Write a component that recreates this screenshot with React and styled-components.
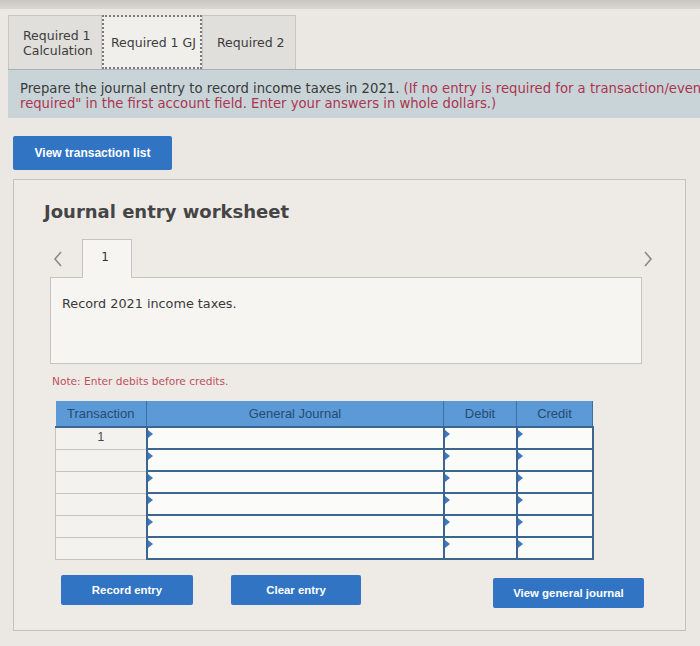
import React from 'react'
import styled, { createGlobalStyle } from 'styled-components'

const GlobalStyle = createGlobalStyle`
  html, body {
    margin: 0;
    padding: 0;
    background: #ebe8e3;
    width: 700px;
    height: 646px;
    overflow: hidden;
  }
  * {
    box-sizing: border-box;
  }
`

const Page = styled.div`
  width: 700px;
  height: 646px;
  overflow: hidden;
  font-family: 'DejaVu Sans', Verdana, sans-serif;
  color: #3a3a3a;
`

const TopBand = styled.div`
  height: 9px;
  background: linear-gradient(#c9c6c1, #d9d6d1);
`

const TabRow = styled.div`
  display: flex;
  margin: 6px 0 0 8px;
  height: 54px;
`

const Tab = styled.div`
  width: ${(p) => p.$width}px;
  display: flex;
  align-items: center;
  padding-left: ${(p) => (p.$active ? 7 : 14)}px;
  font-size: 12.5px;
  line-height: 15px;
  color: #3c3c3c;
  background: ${(p) => (p.$active ? '#f1efeb' : '#e1dfdb')};
  border: ${(p) => (p.$active ? '2px dotted #7a7a7a' : '1px solid #c8c6c2')};
  border-bottom: ${(p) => (p.$active ? '2px dotted #7a7a7a' : 'none')};
`

const Instructions = styled.div`
  margin-left: 8px;
  height: 49px;
  background: #c9d4d8;
  border-top: 1px solid #a9b1b4;
  padding: 11px 0 0 12px;
  font-size: 13.2px;
  line-height: 15px;
  white-space: nowrap;
  overflow: hidden;
`

const Red = styled.span`
  color: #ab3550;
`

const BlueButton = styled.button`
  display: flex;
  align-items: center;
  justify-content: center;
  width: ${(p) => p.$width}px;
  height: ${(p) => p.$height || 30}px;
  margin-top: ${(p) => p.$top || 0}px;
  margin-left: ${(p) => p.$left || 0}px;
  background: #3174c3;
  border: none;
  border-radius: 2px;
  color: #ffffff;
  font-family: 'Liberation Sans', Arial, sans-serif;
  font-weight: bold;
  font-size: ${(p) => p.$size || 11.4}px;
  padding: 0;
`

const TransactionButton = styled(BlueButton)`
  margin: 18px 0 0 13px;
`

const Panel = styled.div`
  margin: 9px 14px 0 13px;
  border: 1px solid #c4c2be;
  background: #eeebe7;
  padding: 19px 0 22px 36px;
`

const Title = styled.h2`
  margin: 0 0 0 -6px;
  font-size: 18px;
  line-height: 26px;
  font-weight: bold;
  color: #454545;
`

const NavRow = styled.div`
  display: flex;
  align-items: center;
  width: 606px;
  margin-top: 14px;
  height: 39px;
  margin-bottom: -1px;
  position: relative;
  z-index: 1;
`

const Chevron = styled.svg`
  width: 12px;
  height: 18px;
  margin: ${(p) => p.$margin};
`

const EntryTab = styled.div`
  width: 50px;
  height: 39px;
  background: #f6f5f2;
  border: 1px solid #c6c4c0;
  border-bottom: none;
  display: flex;
  justify-content: center;
  padding: 10px 4px 0 0;
  font-size: 12px;
  color: #333;
`

const Spacer = styled.div`
  flex: 1;
`

const EntryBox = styled.div`
  width: 592px;
  height: 87px;
  background: #f6f5f2;
  border: 1px solid #c6c4c0;
  padding: 17px 0 0 11px;
  font-size: 12.8px;
  line-height: 18px;
  color: #3a3a3a;
`

const Note = styled.div`
  margin: 10px 0 0 2px;
  font-size: 10.6px;
  line-height: 14px;
  color: #c0505c;
`

const Table = styled.table`
  margin: 13px 0 0 5px;
  border-collapse: collapse;
  width: 537px;
  table-layout: fixed;
  font-family: 'Liberation Sans', Arial, sans-serif;
`

const HeadCell = styled.th`
  width: ${(p) => p.$width}px;
  height: 26px;
  background: #5b9ad6;
  border-right: 1px solid #3f70a3;
  border-bottom: 2px solid #3c6590;
  font-weight: normal;
  font-size: 13px;
  color: #294a70;
  padding: 0;
`

const RowCell = styled.td`
  height: 22px;
  padding: 0;
  text-align: center;
  font-size: 12px;
  color: #444;
  background: ${(p) => (p.$input ? '#fbfbfa' : '#f3f2ef')};
  border: ${(p) => (p.$input ? '2px solid #3c6590' : '1px solid #c4c4c2')};
  position: relative;
  vertical-align: top;
  line-height: 18px;

  ${(p) =>
    p.$input &&
    `
    &::before {
      content: '';
      position: absolute;
      left: 0;
      top: 2px;
      border-top: 4px solid transparent;
      border-bottom: 4px solid transparent;
      border-left: 5px solid #3f78c0;
    }
  `}
`

const ButtonRow = styled.div`
  display: flex;
  align-items: flex-start;
  margin: 15px 0 0 11px;
  width: 583px;
`

const rows = ['1', '', '', '', '', '']

const App = () => {
  return (
    <Page>
      <GlobalStyle />
      <TopBand />
      <TabRow>
        <Tab $width={94}>
          Required 1
          <br />
          Calculation
        </Tab>
        <Tab $width={100} $active>
          Required 1 GJ
        </Tab>
        <Tab $width={94}>Required 2</Tab>
      </TabRow>
      <Instructions>
        Prepare the journal entry to record income taxes in 2021.{' '}
        <Red>(If no entry is required for a transaction/event, select "No journal entry</Red>
        <br />
        <Red>required" in the first account field. Enter your answers in whole dollars.)</Red>
      </Instructions>
      <TransactionButton $width={159} $height={34} $size={12}>
        View transaction list
      </TransactionButton>
      <Panel>
        <Title>Journal entry worksheet</Title>
        <NavRow>
          <Chevron viewBox="0 0 12 18" $margin="0 18px 0 2px">
            <polyline points="9,2 3,9 9,16" fill="none" stroke="#8a8a8a" strokeWidth="1.6" />
          </Chevron>
          <EntryTab>1</EntryTab>
          <Spacer />
          <Chevron viewBox="0 0 12 18" $margin="0 2px 0 0">
            <polyline points="3,2 9,9 3,16" fill="none" stroke="#8a8a8a" strokeWidth="1.6" />
          </Chevron>
        </NavRow>
        <EntryBox>Record 2021 income taxes.</EntryBox>
        <Note>Note: Enter debits before credits.</Note>
        <Table>
          <thead>
            <tr>
              <HeadCell $width={91}>Transaction</HeadCell>
              <HeadCell $width={297}>General Journal</HeadCell>
              <HeadCell $width={73}>Debit</HeadCell>
              <HeadCell $width={76}>Credit</HeadCell>
            </tr>
          </thead>
          <tbody>
            {rows.map((num, i) => (
              <tr key={i}>
                <RowCell>{num}</RowCell>
                <RowCell $input />
                <RowCell $input />
                <RowCell $input />
              </tr>
            ))}
          </tbody>
        </Table>
        <ButtonRow>
          <BlueButton $width={132}>Record entry</BlueButton>
          <BlueButton $width={130} $left={38}>
            Clear entry
          </BlueButton>
          <Spacer />
          <BlueButton $width={151} $top={3}>
            View general journal
          </BlueButton>
        </ButtonRow>
      </Panel>
    </Page>
  )
}

export default App
